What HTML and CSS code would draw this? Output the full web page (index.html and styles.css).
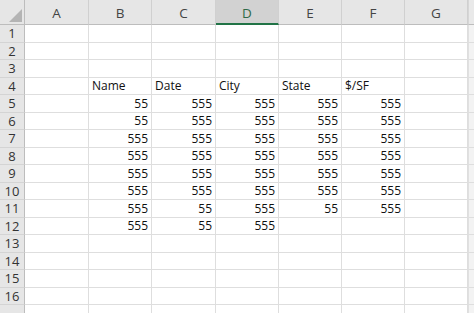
FILE: index.html
```html
<!DOCTYPE html>
<html>
<head>
<meta charset="utf-8">
<link rel="stylesheet" href="styles.css">
</head>
<body>
<div class="sheet">
  <div class="corner"><span class="tri"></span></div>
  <div class="h">A</div><div class="h">B</div><div class="h">C</div><div class="h sel">D</div><div class="h">E</div><div class="h">F</div><div class="h">G</div><div class="h x"></div>

  <div class="r">1</div><div class="c"></div><div class="c"></div><div class="c"></div><div class="c"></div><div class="c"></div><div class="c"></div><div class="c"></div><div class="c x"></div>
  <div class="r">2</div><div class="c"></div><div class="c"></div><div class="c"></div><div class="c"></div><div class="c"></div><div class="c"></div><div class="c"></div><div class="c x"></div>
  <div class="r">3</div><div class="c"></div><div class="c"></div><div class="c"></div><div class="c"></div><div class="c"></div><div class="c"></div><div class="c"></div><div class="c x"></div>
  <div class="r">4</div><div class="c"></div><div class="c t">Name</div><div class="c t">Date</div><div class="c t">City</div><div class="c t">State</div><div class="c t">$/SF</div><div class="c"></div><div class="c x"></div>
  <div class="r">5</div><div class="c"></div><div class="c n">55</div><div class="c n">555</div><div class="c n">555</div><div class="c n">555</div><div class="c n">555</div><div class="c"></div><div class="c x"></div>
  <div class="r">6</div><div class="c"></div><div class="c n">55</div><div class="c n">555</div><div class="c n">555</div><div class="c n">555</div><div class="c n">555</div><div class="c"></div><div class="c x"></div>
  <div class="r">7</div><div class="c"></div><div class="c n">555</div><div class="c n">555</div><div class="c n">555</div><div class="c n">555</div><div class="c n">555</div><div class="c"></div><div class="c x"></div>
  <div class="r">8</div><div class="c"></div><div class="c n">555</div><div class="c n">555</div><div class="c n">555</div><div class="c n">555</div><div class="c n">555</div><div class="c"></div><div class="c x"></div>
  <div class="r">9</div><div class="c"></div><div class="c n">555</div><div class="c n">555</div><div class="c n">555</div><div class="c n">555</div><div class="c n">555</div><div class="c"></div><div class="c x"></div>
  <div class="r">10</div><div class="c"></div><div class="c n">555</div><div class="c n">555</div><div class="c n">555</div><div class="c n">555</div><div class="c n">555</div><div class="c"></div><div class="c x"></div>
  <div class="r">11</div><div class="c"></div><div class="c n">555</div><div class="c n">55</div><div class="c n">555</div><div class="c n">55</div><div class="c n">555</div><div class="c"></div><div class="c x"></div>
  <div class="r">12</div><div class="c"></div><div class="c n">555</div><div class="c n">55</div><div class="c n">555</div><div class="c"></div><div class="c"></div><div class="c"></div><div class="c x"></div>
  <div class="r">13</div><div class="c"></div><div class="c"></div><div class="c"></div><div class="c"></div><div class="c"></div><div class="c"></div><div class="c"></div><div class="c x"></div>
  <div class="r">14</div><div class="c"></div><div class="c"></div><div class="c"></div><div class="c"></div><div class="c"></div><div class="c"></div><div class="c"></div><div class="c x"></div>
  <div class="r">15</div><div class="c"></div><div class="c"></div><div class="c"></div><div class="c"></div><div class="c"></div><div class="c"></div><div class="c"></div><div class="c x"></div>
  <div class="r">16</div><div class="c"></div><div class="c"></div><div class="c"></div><div class="c"></div><div class="c"></div><div class="c"></div><div class="c"></div><div class="c x"></div>
  <div class="r"></div><div class="c"></div><div class="c"></div><div class="c"></div><div class="c"></div><div class="c"></div><div class="c"></div><div class="c"></div><div class="c x"></div>
</div>
</body>
</html>
```

FILE: styles.css
```css
html, body {
  margin: 0;
  padding: 0;
  background: #ffffff;
  overflow: hidden;
}
.sheet {
  display: grid;
  grid-template-columns: 25px 64px 63px 64px 63px 63px 63px 63px 6px;
  grid-template-rows: 25px repeat(17, 17.5px);
  width: 474px;
  font-family: "Open Sans", "Noto Sans", sans-serif;
  font-size: 12px;
}
.corner {
  position: relative;
  background: #e6e6e6;
  border-right: 1px solid #bdbdbd;
  border-bottom: 1px solid #bdbdbd;
  box-sizing: border-box;
}
.tri {
  position: absolute;
  right: 2px;
  bottom: 2px;
  width: 13px;
  height: 13px;
  background: #b4b4b4;
  clip-path: polygon(100% 0, 100% 100%, 0 100%);
}
.h {
  background: #e6e6e6;
  border-right: 1px solid #d0d0d0;
  border-bottom: 1px solid #bdbdbd;
  box-sizing: border-box;
  display: flex;
  align-items: center;
  justify-content: center;
  color: #444444;
  font-size: 13.5px;
  padding-top: 2px;
}
.h.sel {
  background: #d2d2d2;
  border-bottom: 2px solid #217346;
  color: #2f6a48;
}
.h.x {
  background: #e9e9e9;
  border-right: none;
  border-left: 1px solid #d6d6d6;
}
.r {
  background: #e6e6e6;
  border-right: 1px solid #bdbdbd;
  border-bottom: 1px solid #d4d4d4;
  box-sizing: border-box;
  display: flex;
  align-items: center;
  justify-content: center;
  color: #333333;
  font-size: 13px;
}
.c {
  border-right: 1px solid #dedede;
  border-bottom: 1px solid #dedede;
  box-sizing: border-box;
  display: flex;
  align-items: flex-end;
  padding: 0 3px 0 3px;
  color: #111111;
  white-space: nowrap;
  line-height: 16px;
}
.c.n {
  justify-content: flex-end;
}
.c.t {
  justify-content: flex-start;
}
.c.x {
  background: #f3f3f3;
  border-left: 1px solid #e0e0e0;
  border-right: none;
  padding: 0;
}
```
